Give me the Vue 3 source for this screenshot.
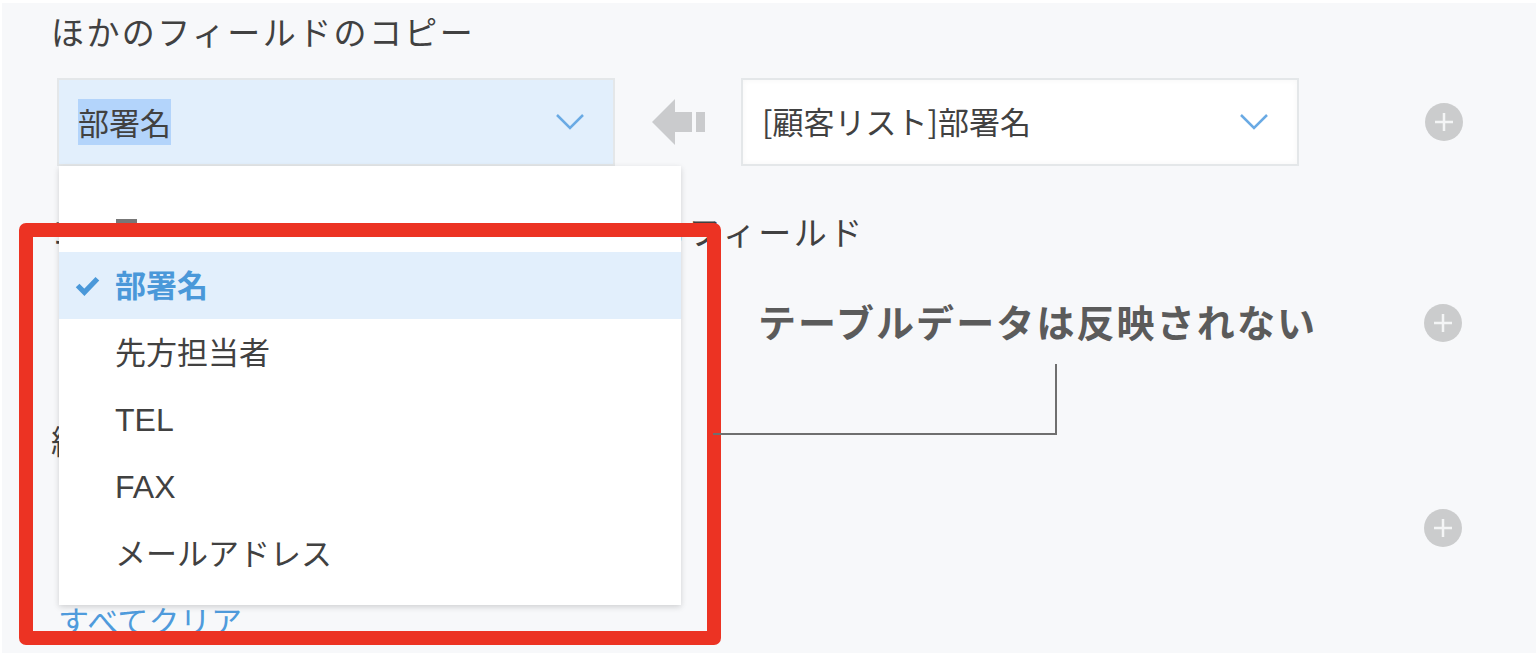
<script setup>
const options = [
  { label: "先方担当者" },
  { label: "TEL", latin: true },
  { label: "FAX", latin: true },
  { label: "メールアドレス" },
];
</script>

<template>
  <div class="panel">
    <h2 class="heading first">ほかのフィールドのコピー</h2>
    <div class="row row-first">
      <div class="select active">
        <span class="selected-text">部署名</span>
        <svg class="chevron" viewBox="0 0 30 18"><path d="M2 2 L15 15 L28 2" /></svg>
        <!-- open dropdown -->
        <div class="dropdown">
          <div class="cut-item"></div>
          <div class="item current">
            <svg class="check" viewBox="0 0 24 20"><path d="M2.5 10 L9 16.5 L21.5 3.5" /></svg>
            部署名
          </div>
          <div v-for="opt in options" :key="opt.label" class="item" :class="{ latin: opt.latin }">{{ opt.label }}</div>
        </div>
      </div>
      <svg class="arrow" viewBox="0 0 54 46">
        <path d="M0 23 L23 0 V13 H40 V33 H23 V46 Z" />
        <rect x="44" y="13" width="9" height="20" />
      </svg>
      <div class="select">
        <span class="select-text">[顧客リスト]部署名</span>
        <svg class="chevron" viewBox="0 0 30 18"><path d="M2 2 L15 15 L28 2" /></svg>
      </div>
      <button class="plus"><svg viewBox="0 0 38 38"><path d="M19 10 V28 M10 19 H28" /></svg></button>
    </div>

    <h2 class="heading second">コピー元のレコードの選択時に表示するフィールド</h2>
    <div class="row row-second">
      <div class="select hidden-select"></div>
      <button class="plus"><svg viewBox="0 0 38 38"><path d="M19 10 V28 M10 19 H28" /></svg></button>
    </div>

    <h2 class="heading third">絞り込みの初期設定</h2>
    <div class="row row-third">
      <div class="select hidden-select"></div>
      <button class="plus"><svg viewBox="0 0 38 38"><path d="M19 10 V28 M10 19 H28" /></svg></button>
    </div>
    <a class="clear">すべてクリア</a>

    <!-- annotations on top of the screenshot -->
    <div class="red-box"></div>
    <div class="note">テーブルデータは反映されない</div>
    <div class="note-line"></div>
  </div>
</template>

<style scoped>
.panel {
  position: relative;
  margin: 3px 0 0 2px;
  height: 650px;
  padding: 8px 0 0 55px;
  box-sizing: border-box;
  overflow: hidden;
  background: #f7f8fa;
  color: #414141;
  font-family: "Noto Sans CJK JP", "Noto Sans", sans-serif;
}
.heading {
  margin: 0 0 0 -6px;
  font-size: 33px;
  font-weight: 400;
  line-height: 40px;
  letter-spacing: 2.4px;
  white-space: nowrap;
}
.heading.second {
  margin-top: 45px;
}
.heading.third {
  margin-top: 53px;
}
.row {
  display: flex;
  align-items: center;
}
.row-first {
  margin-top: 27px;
}
.row-second {
  margin-top: 28px;
}
.row-third {
  margin-top: 24px;
}
.row-second .plus,
.row-third .plus {
  margin-left: 809px;
}
.select {
  position: relative;
  display: flex;
  align-items: center;
  justify-content: space-between;
  box-sizing: border-box;
  width: 558px;
  height: 88px;
  padding: 0 28px 0 19px;
  background: #fff;
  border: 2px solid #e4e7e9;
  box-shadow: inset 0 0 6px rgba(0, 0, 0, 0.04);
  font-size: 31px;
}
.select.active {
  background: #e2effc;
  box-shadow: none;
}
/* rows behind the dropdown, only there for the flow */
.select.hidden-select {
  width: 550px;
  margin-left: 8px;
  border: none;
  box-shadow: none;
}
.select-text {
  margin-bottom: 4px;
}
.selected-text {
  padding: 3px 0;
  background: #b3d4fb;
  font-size: 31px;
  line-height: 40px;
}
.chevron {
  width: 30px;
  height: 18px;
  fill: none;
  stroke: #6aaae4;
  stroke-width: 2.5;
}
.arrow {
  width: 54px;
  height: 46px;
  margin: 0 35px 0 37px;
  fill: #cacbcd;
}
.plus {
  width: 38px;
  height: 38px;
  margin-left: 126px;
  padding: 0;
  border: none;
  border-radius: 50%;
  background: #cbcccd;
}
.plus svg {
  display: block;
  fill: none;
  stroke: #f4f5f6;
  stroke-width: 2.5;
}
.dropdown {
  position: absolute;
  top: 86px;
  left: 0;
  z-index: 2;
  width: 622px;
  height: 439px;
  background: #fff;
  box-shadow: 0 2px 6px rgba(0, 0, 0, 0.16);
  font-size: 31px;
}
.cut-item {
  position: relative;
  height: 86px;
}
.cut-item::before {
  content: "";
  position: absolute;
  top: 53px;
  left: 57px;
  width: 21px;
  height: 4px;
  background: #777;
}
.item {
  position: relative;
  height: 67px;
  padding-left: 56px;
  line-height: 63px;
}
.item.latin {
  font-family: "Liberation Sans", sans-serif;
  font-size: 32px;
  line-height: 69px;
}
.item.current {
  background: #e2effc;
  color: #4a98d9;
  font-weight: 700;
}
.check {
  position: absolute;
  top: 23px;
  left: 16px;
  width: 25px;
  height: 21px;
  fill: none;
  stroke: #4a98d9;
  stroke-width: 5;
}
.clear {
  display: block;
  margin-top: 30px;
  margin-left: 1px;
  color: #4f9bdc;
  font-size: 31px;
  line-height: 36px;
  letter-spacing: 0.3px;
}
.red-box {
  position: absolute;
  top: 220px;
  left: 17px;
  z-index: 3;
  box-sizing: border-box;
  width: 702px;
  height: 422px;
  border: 14px solid #ec3323;
  border-radius: 7px;
}
.note {
  position: absolute;
  top: 295px;
  left: 756px;
  color: #5b5b5b;
  font-size: 38px;
  font-weight: 700;
  line-height: 46px;
  letter-spacing: 2.1px;
  white-space: nowrap;
}
.note-line {
  position: absolute;
  top: 361px;
  left: 711px;
  z-index: 4;
  box-sizing: border-box;
  width: 344px;
  height: 71px;
  border-right: 2px solid #6f6f6f;
  border-bottom: 2px solid #6f6f6f;
}
</style>
